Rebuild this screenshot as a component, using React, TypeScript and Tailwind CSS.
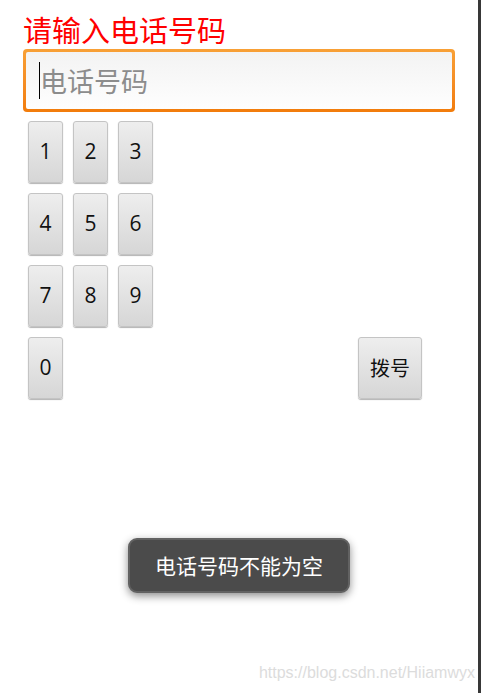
import React from "react";

const cjk = { fontFamily: '"Noto Sans CJK SC", "Noto Sans", sans-serif' };
const digitFont = { fontFamily: '"Open Sans", "Noto Sans", sans-serif' };

function Key({ label, wide }: { label: string; wide?: boolean }) {
  return (
    <button
      className={`${wide ? "w-[64px] text-[20px]" : "w-[35px] text-[21px]"} h-[62px] flex items-center justify-center rounded-[3px] border border-[#c4c4c4] bg-linear-to-b from-[#eeeeee] to-[#d6d6d6] text-[#111] shadow-[0_1px_1px_rgba(0,0,0,0.3)]`}
      style={wide ? cjk : digitFont}
    >
      {label}
    </button>
  );
}

export default function App() {
  const rows = [
    ["1", "2", "3"],
    ["4", "5", "6"],
    ["7", "8", "9"],
  ];
  return (
    <div className="flex w-[481px] h-[693px] bg-white overflow-hidden">
      <div className="relative flex-1 flex flex-col">
        <div
          className="pl-[23px] pt-[12px] h-[46px] text-[29px] leading-[34px] text-[#ff0000]"
          style={cjk}
        >
          请输入电话号码
        </div>
        <div className="ml-[23px] mt-[3px] w-[432px] h-[63px] rounded-[4px] p-[3px] bg-linear-to-b from-[#f8a036] to-[#f27c0a]">
          <div className="h-full rounded-[2px] bg-linear-to-b from-[#f3f3f3] to-[#fefefe] flex items-center pl-[13px]">
            <div className="w-px h-[37px] bg-black" />
            <span className="text-[27px] text-[#8c8c8c] leading-none" style={cjk}>
              电话号码
            </span>
          </div>
        </div>
        <div className="pl-[28px] pt-[9px] flex flex-col gap-[10px]">
          {rows.map((r, i) => (
            <div key={i} className="flex gap-[10px]">
              {r.map((d) => (
                <Key key={d} label={d} />
              ))}
            </div>
          ))}
          <div className="flex pr-[56px]">
            <Key label="0" />
            <div className="ml-auto">
              <Key label="拨号" wide />
            </div>
          </div>
        </div>
        <div
          className="absolute left-[128px] top-[538px] w-[222px] h-[55px] rounded-[9px] border-2 border-[#626262] bg-[#4b4b4b] shadow-[0_3px_8px_rgba(0,0,0,0.45)] flex items-center justify-center text-white text-[21px]"
          style={cjk}
        >
          电话号码不能为空
        </div>
        <div
          className="absolute right-[3px] bottom-[8px] text-[16px] text-[#dcdcdc]"
          style={{ fontFamily: '"Liberation Sans", Arial, sans-serif' }}
        >
          https://blog.csdn.net/Hiiamwyx
        </div>
      </div>
      <div className="w-[3px] h-full bg-[#383838]" />
    </div>
  );
}
